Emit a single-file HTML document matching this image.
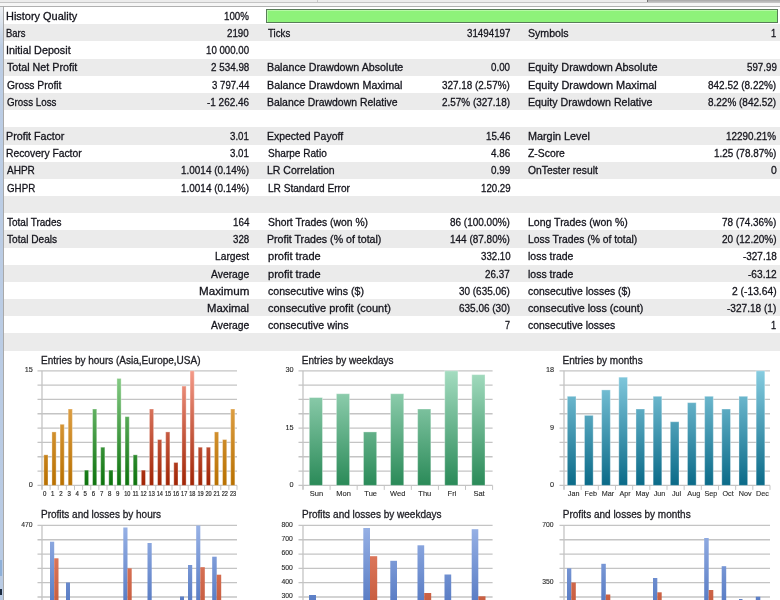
<!DOCTYPE html>
<html><head><meta charset="utf-8">
<style>
html,body{margin:0;padding:0;}
body{width:780px;height:600px;overflow:hidden;background:#fff;position:relative;font-family:"Liberation Sans",sans-serif;}
.rb{position:absolute;left:4px;width:776px;background:#ebebeb;}
.t{position:absolute;font-size:11px;line-height:normal;white-space:pre;color:#14141c;transform-origin:0 0;}
#txt{position:absolute;left:0;top:0;width:780px;height:600px;filter:blur(0.2px);}
.t{-webkit-text-stroke:0.3px #14141c;}
#lstrip{position:absolute;left:0;top:7px;width:3px;height:593px;background:linear-gradient(to bottom,#eceff3 0px,#dfe6ef 12px,#bccde4 40px,#b9cbe4 100%);}
#lspot{position:absolute;left:0;top:560px;width:2px;height:16px;background:#8fb0d8;}
#lglyph{position:absolute;left:0;top:589px;width:1.5px;height:6px;background:#1a2a40;}
#vdiv2{position:absolute;left:647px;top:0;width:1px;height:2px;background:#707070;}
#lline{position:absolute;left:3px;top:6px;width:1px;height:594px;background:#a9a9a9;}
#top0{position:absolute;left:0;top:0;width:780px;height:2px;background:#ececec;}
#top0b{position:absolute;left:647px;top:0;width:133px;height:2px;background:linear-gradient(to bottom,#a8a8a8,#c0c0c0);}
#top1{position:absolute;left:0;top:2px;width:780px;height:1px;background:#c4c4c4;}
#top2{position:absolute;left:0;top:3px;width:780px;height:3px;background:#f6f6f6;}
#top3{position:absolute;left:0;top:6px;width:780px;height:1px;background:#b0b0b0;}
#vdiv{position:absolute;left:317px;top:0;width:1px;height:2px;background:#c8c8c8;}
#gbar{position:absolute;left:266px;top:9px;width:510px;height:12px;border:1px solid #587c58;background:#8ef27a;box-shadow:inset 1px 1px 0 #b6f8a6;}
</style></head><body>
<div id="top0"></div><div id="top0b"></div><div id="vdiv"></div><div id="top1"></div><div id="top2"></div><div id="top3"></div>
<div id="lstrip"></div><div id="lspot"></div><div id="lglyph"></div><div id="lline"></div><div id="vdiv2"></div>
<div class="rb" style="top:24.25px;height:17.18px"></div>
<div class="rb" style="top:58.61px;height:17.18px"></div>
<div class="rb" style="top:92.97px;height:17.18px"></div>
<div class="rb" style="top:127.33px;height:17.18px"></div>
<div class="rb" style="top:161.69px;height:17.18px"></div>
<div class="rb" style="top:196.05px;height:17.18px"></div>
<div class="rb" style="top:230.41px;height:17.18px"></div>
<div class="rb" style="top:264.77px;height:17.18px"></div>
<div class="rb" style="top:299.13px;height:17.18px"></div>
<div class="rb" style="top:333.49px;height:17.18px"></div>
<div id="gbar"></div>
<div id="txt"><span class="t" style="left:6.25px;top:9px;transform:translateY(0.81px) scaleX(0.9951)">History Quality</span>
<span class="t" style="left:224.13px;top:9px;transform:translateY(0.81px) scaleX(0.8881)">100%</span>
<span class="t" style="left:6.36px;top:26px;transform:translateY(1.00px) scaleX(0.8598)">Bars</span>
<span class="t" style="left:227.46px;top:26px;transform:translateY(1.00px) scaleX(0.8884)">2190</span>
<span class="t" style="left:268.20px;top:26px;transform:translateY(1.00px) scaleX(0.8800)">Ticks</span>
<span class="t" style="left:466.78px;top:26px;transform:translateY(1.00px) scaleX(0.8870)">31494197</span>
<span class="t" style="left:528.12px;top:26px;transform:translateY(1.00px) scaleX(0.9639)">Symbols</span>
<span class="t" style="left:771.37px;top:26px;transform:translateY(1.00px) scaleX(0.8400)">1</span>
<span class="t" style="left:6.27px;top:44px;transform:translateY(0.17px) scaleX(0.9786)">Initial Deposit</span>
<span class="t" style="left:206.14px;top:44px;transform:translateY(0.17px) scaleX(0.8792)">10 000.00</span>
<span class="t" style="left:7.00px;top:61px;transform:translateY(0.36px) scaleX(0.9744)">Total Net Profit</span>
<span class="t" style="left:210.95px;top:61px;transform:translateY(0.36px) scaleX(0.8952)">2 534.98</span>
<span class="t" style="left:267.47px;top:61px;transform:translateY(0.36px) scaleX(0.9734)">Balance Drawdown Absolute</span>
<span class="t" style="left:490.98px;top:61px;transform:translateY(0.36px) scaleX(0.8857)">0.00</span>
<span class="t" style="left:527.86px;top:61px;transform:translateY(0.36px) scaleX(0.9904)">Equity Drawdown Absolute</span>
<span class="t" style="left:746.76px;top:61px;transform:translateY(0.36px) scaleX(0.8855)">597.99</span>
<span class="t" style="left:6.53px;top:78px;transform:translateY(0.53px) scaleX(0.9368)">Gross Profit</span>
<span class="t" style="left:211.58px;top:78px;transform:translateY(0.53px) scaleX(0.8753)">3 797.44</span>
<span class="t" style="left:267.47px;top:78px;transform:translateY(0.53px) scaleX(0.9760)">Balance Drawdown Maximal</span>
<span class="t" style="left:442.47px;top:78px;transform:translateY(0.53px) scaleX(0.9007)">327.18 (2.57%)</span>
<span class="t" style="left:527.85px;top:78px;transform:translateY(0.53px) scaleX(0.9934)">Equity Drawdown Maximal</span>
<span class="t" style="left:708.47px;top:78px;transform:translateY(0.53px) scaleX(0.9060)">842.52 (8.22%)</span>
<span class="t" style="left:6.56px;top:95px;transform:translateY(0.72px) scaleX(0.8891)">Gross Loss</span>
<span class="t" style="left:207.17px;top:95px;transform:translateY(0.72px) scaleX(0.9043)">-1 262.46</span>
<span class="t" style="left:267.49px;top:95px;transform:translateY(0.72px) scaleX(0.9495)">Balance Drawdown Relative</span>
<span class="t" style="left:442.25px;top:95px;transform:translateY(0.72px) scaleX(0.9037)">2.57% (327.18)</span>
<span class="t" style="left:527.87px;top:95px;transform:translateY(0.72px) scaleX(0.9690)">Equity Drawdown Relative</span>
<span class="t" style="left:708.47px;top:95px;transform:translateY(0.72px) scaleX(0.9060)">8.22% (842.52)</span>
<span class="t" style="left:6.27px;top:130px;transform:translateY(0.07px) scaleX(0.9738)">Profit Factor</span>
<span class="t" style="left:230.48px;top:130px;transform:translateY(0.07px) scaleX(0.8819)">3.01</span>
<span class="t" style="left:267.49px;top:130px;transform:translateY(0.07px) scaleX(0.9522)">Expected Payoff</span>
<span class="t" style="left:485.63px;top:130px;transform:translateY(0.07px) scaleX(0.8868)">15.46</span>
<span class="t" style="left:527.86px;top:130px;transform:translateY(0.07px) scaleX(0.9830)">Margin Level</span>
<span class="t" style="left:726.33px;top:130px;transform:translateY(0.07px) scaleX(0.8986)">12290.21%</span>
<span class="t" style="left:6.30px;top:147px;transform:translateY(0.25px) scaleX(0.9375)">Recovery Factor</span>
<span class="t" style="left:230.48px;top:147px;transform:translateY(0.25px) scaleX(0.8819)">3.01</span>
<span class="t" style="left:267.74px;top:147px;transform:translateY(0.25px) scaleX(0.9150)">Sharpe Ratio</span>
<span class="t" style="left:490.98px;top:147px;transform:translateY(0.25px) scaleX(0.8964)">4.86</span>
<span class="t" style="left:528.36px;top:147px;transform:translateY(0.25px) scaleX(0.9429)">Z-Score</span>
<span class="t" style="left:714.42px;top:147px;transform:translateY(0.25px) scaleX(0.9018)">1.25 (78.87%)</span>
<span class="t" style="left:7.00px;top:164px;transform:translateY(0.43px) scaleX(0.9100)">AHPR</span>
<span class="t" style="left:181.42px;top:164px;transform:translateY(0.43px) scaleX(0.9041)">1.0014 (0.14%)</span>
<span class="t" style="left:267.48px;top:164px;transform:translateY(0.43px) scaleX(0.9548)">LR Correlation</span>
<span class="t" style="left:490.98px;top:164px;transform:translateY(0.43px) scaleX(0.8964)">0.99</span>
<span class="t" style="left:528.37px;top:164px;transform:translateY(0.43px) scaleX(0.9369)">OnTester result</span>
<span class="t" style="left:770.76px;top:164px;transform:translateY(0.43px) scaleX(0.9455)">0</span>
<span class="t" style="left:6.56px;top:181px;transform:translateY(0.61px) scaleX(0.8878)">GHPR</span>
<span class="t" style="left:181.42px;top:181px;transform:translateY(0.61px) scaleX(0.9041)">1.0014 (0.14%)</span>
<span class="t" style="left:267.51px;top:181px;transform:translateY(0.61px) scaleX(0.9175)">LR Standard Error</span>
<span class="t" style="left:480.54px;top:181px;transform:translateY(0.61px) scaleX(0.8800)">120.29</span>
<span class="t" style="left:7.00px;top:215px;transform:translateY(0.97px) scaleX(0.9088)">Total Trades</span>
<span class="t" style="left:232.73px;top:215px;transform:translateY(0.97px) scaleX(0.8914)">164</span>
<span class="t" style="left:267.73px;top:215px;transform:translateY(0.97px) scaleX(0.9406)">Short Trades (won %)</span>
<span class="t" style="left:450.37px;top:215px;transform:translateY(0.97px) scaleX(0.9073)">86 (100.00%)</span>
<span class="t" style="left:527.88px;top:215px;transform:translateY(0.97px) scaleX(0.9550)">Long Trades (won %)</span>
<span class="t" style="left:722.35px;top:215px;transform:translateY(0.97px) scaleX(0.9051)">78 (74.36%)</span>
<span class="t" style="left:7.00px;top:233px;transform:translateY(0.15px) scaleX(0.9217)">Total Deals</span>
<span class="t" style="left:233.18px;top:233px;transform:translateY(0.15px) scaleX(0.8789)">328</span>
<span class="t" style="left:267.48px;top:233px;transform:translateY(0.15px) scaleX(0.9646)">Profit Trades (% of total)</span>
<span class="t" style="left:450.42px;top:233px;transform:translateY(0.15px) scaleX(0.9066)">144 (87.80%)</span>
<span class="t" style="left:527.89px;top:233px;transform:translateY(0.15px) scaleX(0.9400)">Loss Trades (% of total)</span>
<span class="t" style="left:722.04px;top:233px;transform:translateY(0.15px) scaleX(0.9102)">20 (12.20%)</span>
<span class="t" style="left:214.80px;top:250px;transform:translateY(0.33px) scaleX(0.9306)">Largest</span>
<span class="t" style="left:267.70px;top:250px;transform:translateY(0.33px) scaleX(1.0029)">profit trade</span>
<span class="t" style="left:480.58px;top:250px;transform:translateY(0.33px) scaleX(0.8788)">332.10</span>
<span class="t" style="left:528.12px;top:250px;transform:translateY(0.33px) scaleX(0.9519)">loss trade</span>
<span class="t" style="left:742.77px;top:250px;transform:translateY(0.33px) scaleX(0.9034)">-327.18</span>
<span class="t" style="left:210.90px;top:267px;transform:translateY(0.51px) scaleX(0.9407)">Average</span>
<span class="t" style="left:267.70px;top:267px;transform:translateY(0.51px) scaleX(1.0029)">profit trade</span>
<span class="t" style="left:485.45px;top:267px;transform:translateY(0.51px) scaleX(0.8935)">26.37</span>
<span class="t" style="left:528.12px;top:267px;transform:translateY(0.51px) scaleX(0.9519)">loss trade</span>
<span class="t" style="left:747.87px;top:267px;transform:translateY(0.51px) scaleX(0.9213)">-63.12</span>
<span class="t" style="left:199.11px;top:284px;transform:translateY(0.69px) scaleX(1.0559)">Maximum</span>
<span class="t" style="left:267.96px;top:284px;transform:translateY(0.69px) scaleX(0.9626)">consecutive wins ($)</span>
<span class="t" style="left:459.47px;top:284px;transform:translateY(0.69px) scaleX(0.9027)">30 (635.06)</span>
<span class="t" style="left:528.36px;top:284px;transform:translateY(0.69px) scaleX(0.9435)">consecutive losses ($)</span>
<span class="t" style="left:732.03px;top:284px;transform:translateY(0.69px) scaleX(0.9348)">2 (-13.64)</span>
<span class="t" style="left:207.33px;top:301px;transform:translateY(0.88px) scaleX(1.0289)">Maximal</span>
<span class="t" style="left:267.95px;top:301px;transform:translateY(0.88px) scaleX(1.0004)">consecutive profit (count)</span>
<span class="t" style="left:459.25px;top:301px;transform:translateY(0.88px) scaleX(0.9068)">635.06 (30)</span>
<span class="t" style="left:528.36px;top:301px;transform:translateY(0.88px) scaleX(0.9765)">consecutive loss (count)</span>
<span class="t" style="left:727.37px;top:301px;transform:translateY(0.88px) scaleX(0.9170)">-327.18 (1)</span>
<span class="t" style="left:210.90px;top:319px;transform:translateY(0.06px) scaleX(0.9407)">Average</span>
<span class="t" style="left:267.96px;top:319px;transform:translateY(0.06px) scaleX(0.9680)">consecutive wins</span>
<span class="t" style="left:505.09px;top:319px;transform:translateY(0.06px) scaleX(0.8190)">7</span>
<span class="t" style="left:528.36px;top:319px;transform:translateY(0.06px) scaleX(0.9450)">consecutive losses</span>
<span class="t" style="left:771.37px;top:319px;transform:translateY(0.06px) scaleX(0.8400)">1</span></div>
<svg id="ch" width="780" height="600" viewBox="0 0 780 600" style="position:absolute;left:0;top:0;filter:blur(0.2px)">
<defs>
<linearGradient id="gor" gradientUnits="userSpaceOnUse" x1="0" y1="370.8" x2="0" y2="485.4"><stop offset="0" stop-color="#eeb462"/><stop offset="1" stop-color="#b87000"/></linearGradient>
<linearGradient id="ggr" gradientUnits="userSpaceOnUse" x1="0" y1="370.8" x2="0" y2="485.4"><stop offset="0" stop-color="#8cd08c"/><stop offset="1" stop-color="#0c720c"/></linearGradient>
<linearGradient id="grd" gradientUnits="userSpaceOnUse" x1="0" y1="370.8" x2="0" y2="485.4"><stop offset="0" stop-color="#f49a88"/><stop offset="1" stop-color="#a02404"/></linearGradient>
<linearGradient id="gwk" gradientUnits="userSpaceOnUse" x1="0" y1="370.8" x2="0" y2="485.4"><stop offset="0" stop-color="#a4dcc0"/><stop offset="1" stop-color="#2a8a58"/></linearGradient>
<linearGradient id="gmo" gradientUnits="userSpaceOnUse" x1="0" y1="370.8" x2="0" y2="485.4"><stop offset="0" stop-color="#86cce0"/><stop offset="1" stop-color="#0a6a88"/></linearGradient>
<linearGradient id="gbl" gradientUnits="userSpaceOnUse" x1="0" y1="525.4" x2="0" y2="640"><stop offset="0" stop-color="#98b2e6"/><stop offset="1" stop-color="#3a62b4"/></linearGradient>
<linearGradient id="grl" gradientUnits="userSpaceOnUse" x1="0" y1="525.4" x2="0" y2="640"><stop offset="0" stop-color="#e8866c"/><stop offset="1" stop-color="#b84a2a"/></linearGradient>
</defs>
<text x="41.00" y="364.20" font-family="Liberation Sans" font-size="10" text-anchor="start" fill="#1e1e24" stroke="#1e1e24" stroke-width="0.3">Entries by hours (Asia,Europe,USA)</text>
<line x1="37.5" y1="370.80" x2="237" y2="370.80" stroke="#c4c4c4" stroke-width="1.3"/>
<line x1="37.5" y1="385.12" x2="237" y2="385.12" stroke="#c4c4c4" stroke-width="1.3"/>
<line x1="37.5" y1="399.45" x2="237" y2="399.45" stroke="#c4c4c4" stroke-width="1.3"/>
<line x1="37.5" y1="413.77" x2="237" y2="413.77" stroke="#c4c4c4" stroke-width="1.3"/>
<line x1="37.5" y1="428.10" x2="237" y2="428.10" stroke="#c4c4c4" stroke-width="1.3"/>
<line x1="37.5" y1="442.42" x2="237" y2="442.42" stroke="#c4c4c4" stroke-width="1.3"/>
<line x1="37.5" y1="456.75" x2="237" y2="456.75" stroke="#c4c4c4" stroke-width="1.3"/>
<line x1="37.5" y1="471.07" x2="237" y2="471.07" stroke="#c4c4c4" stroke-width="1.3"/>
<line x1="37.5" y1="485.40" x2="237" y2="485.40" stroke="#c4c4c4" stroke-width="1.3"/>
<line x1="42" y1="370.80" x2="42" y2="489.40" stroke="#c4c4c4" stroke-width="1.3"/>
<line x1="42.00" y1="485.40" x2="42.00" y2="489.90" stroke="#c4c4c4" stroke-width="1"/>
<line x1="50.12" y1="485.40" x2="50.12" y2="489.90" stroke="#c4c4c4" stroke-width="1"/>
<line x1="58.25" y1="485.40" x2="58.25" y2="489.90" stroke="#c4c4c4" stroke-width="1"/>
<line x1="66.38" y1="485.40" x2="66.38" y2="489.90" stroke="#c4c4c4" stroke-width="1"/>
<line x1="74.50" y1="485.40" x2="74.50" y2="489.90" stroke="#c4c4c4" stroke-width="1"/>
<line x1="82.62" y1="485.40" x2="82.62" y2="489.90" stroke="#c4c4c4" stroke-width="1"/>
<line x1="90.75" y1="485.40" x2="90.75" y2="489.90" stroke="#c4c4c4" stroke-width="1"/>
<line x1="98.88" y1="485.40" x2="98.88" y2="489.90" stroke="#c4c4c4" stroke-width="1"/>
<line x1="107.00" y1="485.40" x2="107.00" y2="489.90" stroke="#c4c4c4" stroke-width="1"/>
<line x1="115.12" y1="485.40" x2="115.12" y2="489.90" stroke="#c4c4c4" stroke-width="1"/>
<line x1="123.25" y1="485.40" x2="123.25" y2="489.90" stroke="#c4c4c4" stroke-width="1"/>
<line x1="131.38" y1="485.40" x2="131.38" y2="489.90" stroke="#c4c4c4" stroke-width="1"/>
<line x1="139.50" y1="485.40" x2="139.50" y2="489.90" stroke="#c4c4c4" stroke-width="1"/>
<line x1="147.62" y1="485.40" x2="147.62" y2="489.90" stroke="#c4c4c4" stroke-width="1"/>
<line x1="155.75" y1="485.40" x2="155.75" y2="489.90" stroke="#c4c4c4" stroke-width="1"/>
<line x1="163.88" y1="485.40" x2="163.88" y2="489.90" stroke="#c4c4c4" stroke-width="1"/>
<line x1="172.00" y1="485.40" x2="172.00" y2="489.90" stroke="#c4c4c4" stroke-width="1"/>
<line x1="180.12" y1="485.40" x2="180.12" y2="489.90" stroke="#c4c4c4" stroke-width="1"/>
<line x1="188.25" y1="485.40" x2="188.25" y2="489.90" stroke="#c4c4c4" stroke-width="1"/>
<line x1="196.38" y1="485.40" x2="196.38" y2="489.90" stroke="#c4c4c4" stroke-width="1"/>
<line x1="204.50" y1="485.40" x2="204.50" y2="489.90" stroke="#c4c4c4" stroke-width="1"/>
<line x1="212.62" y1="485.40" x2="212.62" y2="489.90" stroke="#c4c4c4" stroke-width="1"/>
<line x1="220.75" y1="485.40" x2="220.75" y2="489.90" stroke="#c4c4c4" stroke-width="1"/>
<line x1="228.88" y1="485.40" x2="228.88" y2="489.90" stroke="#c4c4c4" stroke-width="1"/>
<line x1="237.00" y1="485.40" x2="237.00" y2="489.90" stroke="#c4c4c4" stroke-width="1"/>
<rect x="43.80" y="454.84" width="4.2" height="30.56" fill="url(#gor)" stroke="#fff" stroke-opacity="0.35" stroke-width="1"/>
<rect x="51.92" y="431.92" width="4.2" height="53.48" fill="url(#gor)" stroke="#fff" stroke-opacity="0.35" stroke-width="1"/>
<rect x="60.05" y="424.28" width="4.2" height="61.12" fill="url(#gor)" stroke="#fff" stroke-opacity="0.35" stroke-width="1"/>
<rect x="68.17" y="409.00" width="4.2" height="76.40" fill="url(#gor)" stroke="#fff" stroke-opacity="0.35" stroke-width="1"/>
<rect x="84.42" y="470.12" width="4.2" height="15.28" fill="url(#ggr)" stroke="#fff" stroke-opacity="0.35" stroke-width="1"/>
<rect x="92.55" y="409.00" width="4.2" height="76.40" fill="url(#ggr)" stroke="#fff" stroke-opacity="0.35" stroke-width="1"/>
<rect x="100.67" y="447.20" width="4.2" height="38.20" fill="url(#ggr)" stroke="#fff" stroke-opacity="0.35" stroke-width="1"/>
<rect x="108.80" y="470.12" width="4.2" height="15.28" fill="url(#ggr)" stroke="#fff" stroke-opacity="0.35" stroke-width="1"/>
<rect x="116.92" y="378.44" width="4.2" height="106.96" fill="url(#ggr)" stroke="#fff" stroke-opacity="0.35" stroke-width="1"/>
<rect x="125.05" y="416.64" width="4.2" height="68.76" fill="url(#ggr)" stroke="#fff" stroke-opacity="0.35" stroke-width="1"/>
<rect x="133.18" y="454.84" width="4.2" height="30.56" fill="url(#ggr)" stroke="#fff" stroke-opacity="0.35" stroke-width="1"/>
<rect x="141.30" y="470.12" width="4.2" height="15.28" fill="url(#grd)" stroke="#fff" stroke-opacity="0.35" stroke-width="1"/>
<rect x="149.43" y="409.00" width="4.2" height="76.40" fill="url(#grd)" stroke="#fff" stroke-opacity="0.35" stroke-width="1"/>
<rect x="157.55" y="439.56" width="4.2" height="45.84" fill="url(#grd)" stroke="#fff" stroke-opacity="0.35" stroke-width="1"/>
<rect x="165.68" y="431.92" width="4.2" height="53.48" fill="url(#grd)" stroke="#fff" stroke-opacity="0.35" stroke-width="1"/>
<rect x="173.80" y="462.48" width="4.2" height="22.92" fill="url(#grd)" stroke="#fff" stroke-opacity="0.35" stroke-width="1"/>
<rect x="181.93" y="386.08" width="4.2" height="99.32" fill="url(#grd)" stroke="#fff" stroke-opacity="0.35" stroke-width="1"/>
<rect x="190.05" y="370.80" width="4.2" height="114.60" fill="url(#grd)" stroke="#fff" stroke-opacity="0.35" stroke-width="1"/>
<rect x="198.18" y="447.20" width="4.2" height="38.20" fill="url(#grd)" stroke="#fff" stroke-opacity="0.35" stroke-width="1"/>
<rect x="206.30" y="447.20" width="4.2" height="38.20" fill="url(#grd)" stroke="#fff" stroke-opacity="0.35" stroke-width="1"/>
<rect x="214.43" y="431.92" width="4.2" height="53.48" fill="url(#gor)" stroke="#fff" stroke-opacity="0.35" stroke-width="1"/>
<rect x="222.55" y="439.56" width="4.2" height="45.84" fill="url(#gor)" stroke="#fff" stroke-opacity="0.35" stroke-width="1"/>
<rect x="230.68" y="409.00" width="4.2" height="76.40" fill="url(#gor)" stroke="#fff" stroke-opacity="0.35" stroke-width="1"/>
<text x="43.00" y="496.00" font-family="Liberation Sans" font-size="7.0" text-anchor="start" fill="#2a2a2a" stroke="#2a2a2a" stroke-width="0.2" textLength="3.4" lengthAdjust="spacingAndGlyphs">0</text>
<text x="51.12" y="496.00" font-family="Liberation Sans" font-size="7.0" text-anchor="start" fill="#2a2a2a" stroke="#2a2a2a" stroke-width="0.2" textLength="3.4" lengthAdjust="spacingAndGlyphs">1</text>
<text x="59.25" y="496.00" font-family="Liberation Sans" font-size="7.0" text-anchor="start" fill="#2a2a2a" stroke="#2a2a2a" stroke-width="0.2" textLength="3.4" lengthAdjust="spacingAndGlyphs">2</text>
<text x="67.38" y="496.00" font-family="Liberation Sans" font-size="7.0" text-anchor="start" fill="#2a2a2a" stroke="#2a2a2a" stroke-width="0.2" textLength="3.4" lengthAdjust="spacingAndGlyphs">3</text>
<text x="75.50" y="496.00" font-family="Liberation Sans" font-size="7.0" text-anchor="start" fill="#2a2a2a" stroke="#2a2a2a" stroke-width="0.2" textLength="3.4" lengthAdjust="spacingAndGlyphs">4</text>
<text x="83.62" y="496.00" font-family="Liberation Sans" font-size="7.0" text-anchor="start" fill="#2a2a2a" stroke="#2a2a2a" stroke-width="0.2" textLength="3.4" lengthAdjust="spacingAndGlyphs">5</text>
<text x="91.75" y="496.00" font-family="Liberation Sans" font-size="7.0" text-anchor="start" fill="#2a2a2a" stroke="#2a2a2a" stroke-width="0.2" textLength="3.4" lengthAdjust="spacingAndGlyphs">6</text>
<text x="99.88" y="496.00" font-family="Liberation Sans" font-size="7.0" text-anchor="start" fill="#2a2a2a" stroke="#2a2a2a" stroke-width="0.2" textLength="3.4" lengthAdjust="spacingAndGlyphs">7</text>
<text x="108.00" y="496.00" font-family="Liberation Sans" font-size="7.0" text-anchor="start" fill="#2a2a2a" stroke="#2a2a2a" stroke-width="0.2" textLength="3.4" lengthAdjust="spacingAndGlyphs">8</text>
<text x="116.12" y="496.00" font-family="Liberation Sans" font-size="7.0" text-anchor="start" fill="#2a2a2a" stroke="#2a2a2a" stroke-width="0.2" textLength="3.4" lengthAdjust="spacingAndGlyphs">9</text>
<text x="124.25" y="496.00" font-family="Liberation Sans" font-size="7.0" text-anchor="start" fill="#2a2a2a" stroke="#2a2a2a" stroke-width="0.2" textLength="6.2" lengthAdjust="spacingAndGlyphs">10</text>
<text x="132.38" y="496.00" font-family="Liberation Sans" font-size="7.0" text-anchor="start" fill="#2a2a2a" stroke="#2a2a2a" stroke-width="0.2" textLength="6.2" lengthAdjust="spacingAndGlyphs">11</text>
<text x="140.50" y="496.00" font-family="Liberation Sans" font-size="7.0" text-anchor="start" fill="#2a2a2a" stroke="#2a2a2a" stroke-width="0.2" textLength="6.2" lengthAdjust="spacingAndGlyphs">12</text>
<text x="148.62" y="496.00" font-family="Liberation Sans" font-size="7.0" text-anchor="start" fill="#2a2a2a" stroke="#2a2a2a" stroke-width="0.2" textLength="6.2" lengthAdjust="spacingAndGlyphs">13</text>
<text x="156.75" y="496.00" font-family="Liberation Sans" font-size="7.0" text-anchor="start" fill="#2a2a2a" stroke="#2a2a2a" stroke-width="0.2" textLength="6.2" lengthAdjust="spacingAndGlyphs">14</text>
<text x="164.88" y="496.00" font-family="Liberation Sans" font-size="7.0" text-anchor="start" fill="#2a2a2a" stroke="#2a2a2a" stroke-width="0.2" textLength="6.2" lengthAdjust="spacingAndGlyphs">15</text>
<text x="173.00" y="496.00" font-family="Liberation Sans" font-size="7.0" text-anchor="start" fill="#2a2a2a" stroke="#2a2a2a" stroke-width="0.2" textLength="6.2" lengthAdjust="spacingAndGlyphs">16</text>
<text x="181.12" y="496.00" font-family="Liberation Sans" font-size="7.0" text-anchor="start" fill="#2a2a2a" stroke="#2a2a2a" stroke-width="0.2" textLength="6.2" lengthAdjust="spacingAndGlyphs">17</text>
<text x="189.25" y="496.00" font-family="Liberation Sans" font-size="7.0" text-anchor="start" fill="#2a2a2a" stroke="#2a2a2a" stroke-width="0.2" textLength="6.2" lengthAdjust="spacingAndGlyphs">18</text>
<text x="197.38" y="496.00" font-family="Liberation Sans" font-size="7.0" text-anchor="start" fill="#2a2a2a" stroke="#2a2a2a" stroke-width="0.2" textLength="6.2" lengthAdjust="spacingAndGlyphs">19</text>
<text x="205.50" y="496.00" font-family="Liberation Sans" font-size="7.0" text-anchor="start" fill="#2a2a2a" stroke="#2a2a2a" stroke-width="0.2" textLength="6.2" lengthAdjust="spacingAndGlyphs">20</text>
<text x="213.62" y="496.00" font-family="Liberation Sans" font-size="7.0" text-anchor="start" fill="#2a2a2a" stroke="#2a2a2a" stroke-width="0.2" textLength="6.2" lengthAdjust="spacingAndGlyphs">21</text>
<text x="221.75" y="496.00" font-family="Liberation Sans" font-size="7.0" text-anchor="start" fill="#2a2a2a" stroke="#2a2a2a" stroke-width="0.2" textLength="6.2" lengthAdjust="spacingAndGlyphs">22</text>
<text x="229.88" y="496.00" font-family="Liberation Sans" font-size="7.0" text-anchor="start" fill="#2a2a2a" stroke="#2a2a2a" stroke-width="0.2" textLength="6.2" lengthAdjust="spacingAndGlyphs">23</text>
<text x="32.80" y="372.40" font-family="Liberation Sans" font-size="7.3" text-anchor="end" fill="#2a2a2a" stroke="#2a2a2a" stroke-width="0.12">15</text>
<text x="32.80" y="487.00" font-family="Liberation Sans" font-size="7.3" text-anchor="end" fill="#2a2a2a" stroke="#2a2a2a" stroke-width="0.12">0</text>
<text x="301.80" y="364.20" font-family="Liberation Sans" font-size="10" text-anchor="start" fill="#1e1e24" stroke="#1e1e24" stroke-width="0.3">Entries by weekdays</text>
<line x1="298.5" y1="370.80" x2="492.6" y2="370.80" stroke="#c4c4c4" stroke-width="1.3"/>
<line x1="298.5" y1="385.12" x2="492.6" y2="385.12" stroke="#c4c4c4" stroke-width="1.3"/>
<line x1="298.5" y1="399.45" x2="492.6" y2="399.45" stroke="#c4c4c4" stroke-width="1.3"/>
<line x1="298.5" y1="413.77" x2="492.6" y2="413.77" stroke="#c4c4c4" stroke-width="1.3"/>
<line x1="298.5" y1="428.10" x2="492.6" y2="428.10" stroke="#c4c4c4" stroke-width="1.3"/>
<line x1="298.5" y1="442.42" x2="492.6" y2="442.42" stroke="#c4c4c4" stroke-width="1.3"/>
<line x1="298.5" y1="456.75" x2="492.6" y2="456.75" stroke="#c4c4c4" stroke-width="1.3"/>
<line x1="298.5" y1="471.07" x2="492.6" y2="471.07" stroke="#c4c4c4" stroke-width="1.3"/>
<line x1="298.5" y1="485.40" x2="492.6" y2="485.40" stroke="#c4c4c4" stroke-width="1.3"/>
<line x1="303" y1="370.80" x2="303" y2="489.40" stroke="#c4c4c4" stroke-width="1.3"/>
<line x1="303.00" y1="485.40" x2="303.00" y2="489.90" stroke="#c4c4c4" stroke-width="1"/>
<line x1="330.09" y1="485.40" x2="330.09" y2="489.90" stroke="#c4c4c4" stroke-width="1"/>
<line x1="357.17" y1="485.40" x2="357.17" y2="489.90" stroke="#c4c4c4" stroke-width="1"/>
<line x1="384.26" y1="485.40" x2="384.26" y2="489.90" stroke="#c4c4c4" stroke-width="1"/>
<line x1="411.34" y1="485.40" x2="411.34" y2="489.90" stroke="#c4c4c4" stroke-width="1"/>
<line x1="438.43" y1="485.40" x2="438.43" y2="489.90" stroke="#c4c4c4" stroke-width="1"/>
<line x1="465.51" y1="485.40" x2="465.51" y2="489.90" stroke="#c4c4c4" stroke-width="1"/>
<line x1="492.60" y1="485.40" x2="492.60" y2="489.90" stroke="#c4c4c4" stroke-width="1"/>
<rect x="309.30" y="397.54" width="13.2" height="87.86" fill="url(#gwk)" stroke="#fff" stroke-opacity="0.35" stroke-width="1"/>
<text x="316.50" y="496.30" font-family="Liberation Sans" font-size="7.5" text-anchor="middle" fill="#2a2a2a" stroke="#2a2a2a" stroke-width="0.12">Sun</text>
<rect x="336.39" y="393.72" width="13.2" height="91.68" fill="url(#gwk)" stroke="#fff" stroke-opacity="0.35" stroke-width="1"/>
<text x="343.59" y="496.30" font-family="Liberation Sans" font-size="7.5" text-anchor="middle" fill="#2a2a2a" stroke="#2a2a2a" stroke-width="0.12">Mon</text>
<rect x="363.47" y="431.92" width="13.2" height="53.48" fill="url(#gwk)" stroke="#fff" stroke-opacity="0.35" stroke-width="1"/>
<text x="370.67" y="496.30" font-family="Liberation Sans" font-size="7.5" text-anchor="middle" fill="#2a2a2a" stroke="#2a2a2a" stroke-width="0.12">Tue</text>
<rect x="390.56" y="393.72" width="13.2" height="91.68" fill="url(#gwk)" stroke="#fff" stroke-opacity="0.35" stroke-width="1"/>
<text x="397.76" y="496.30" font-family="Liberation Sans" font-size="7.5" text-anchor="middle" fill="#2a2a2a" stroke="#2a2a2a" stroke-width="0.12">Wed</text>
<rect x="417.64" y="409.00" width="13.2" height="76.40" fill="url(#gwk)" stroke="#fff" stroke-opacity="0.35" stroke-width="1"/>
<text x="424.84" y="496.30" font-family="Liberation Sans" font-size="7.5" text-anchor="middle" fill="#2a2a2a" stroke="#2a2a2a" stroke-width="0.12">Thu</text>
<rect x="444.73" y="370.80" width="13.2" height="114.60" fill="url(#gwk)" stroke="#fff" stroke-opacity="0.35" stroke-width="1"/>
<text x="451.93" y="496.30" font-family="Liberation Sans" font-size="7.5" text-anchor="middle" fill="#2a2a2a" stroke="#2a2a2a" stroke-width="0.12">Fri</text>
<rect x="471.81" y="374.62" width="13.2" height="110.78" fill="url(#gwk)" stroke="#fff" stroke-opacity="0.35" stroke-width="1"/>
<text x="479.01" y="496.30" font-family="Liberation Sans" font-size="7.5" text-anchor="middle" fill="#2a2a2a" stroke="#2a2a2a" stroke-width="0.12">Sat</text>
<text x="293.60" y="372.40" font-family="Liberation Sans" font-size="7.3" text-anchor="end" fill="#2a2a2a" stroke="#2a2a2a" stroke-width="0.12">30</text>
<text x="293.60" y="429.70" font-family="Liberation Sans" font-size="7.3" text-anchor="end" fill="#2a2a2a" stroke="#2a2a2a" stroke-width="0.12">15</text>
<text x="293.60" y="487.00" font-family="Liberation Sans" font-size="7.3" text-anchor="end" fill="#2a2a2a" stroke="#2a2a2a" stroke-width="0.12">0</text>
<text x="562.60" y="364.20" font-family="Liberation Sans" font-size="10" text-anchor="start" fill="#1e1e24" stroke="#1e1e24" stroke-width="0.3">Entries by months</text>
<line x1="559.5" y1="370.80" x2="770" y2="370.80" stroke="#c4c4c4" stroke-width="1.3"/>
<line x1="559.5" y1="385.12" x2="770" y2="385.12" stroke="#c4c4c4" stroke-width="1.3"/>
<line x1="559.5" y1="399.45" x2="770" y2="399.45" stroke="#c4c4c4" stroke-width="1.3"/>
<line x1="559.5" y1="413.77" x2="770" y2="413.77" stroke="#c4c4c4" stroke-width="1.3"/>
<line x1="559.5" y1="428.10" x2="770" y2="428.10" stroke="#c4c4c4" stroke-width="1.3"/>
<line x1="559.5" y1="442.42" x2="770" y2="442.42" stroke="#c4c4c4" stroke-width="1.3"/>
<line x1="559.5" y1="456.75" x2="770" y2="456.75" stroke="#c4c4c4" stroke-width="1.3"/>
<line x1="559.5" y1="471.07" x2="770" y2="471.07" stroke="#c4c4c4" stroke-width="1.3"/>
<line x1="559.5" y1="485.40" x2="770" y2="485.40" stroke="#c4c4c4" stroke-width="1.3"/>
<line x1="564" y1="370.80" x2="564" y2="489.40" stroke="#c4c4c4" stroke-width="1.3"/>
<line x1="564.00" y1="485.40" x2="564.00" y2="489.90" stroke="#c4c4c4" stroke-width="1"/>
<line x1="581.17" y1="485.40" x2="581.17" y2="489.90" stroke="#c4c4c4" stroke-width="1"/>
<line x1="598.33" y1="485.40" x2="598.33" y2="489.90" stroke="#c4c4c4" stroke-width="1"/>
<line x1="615.50" y1="485.40" x2="615.50" y2="489.90" stroke="#c4c4c4" stroke-width="1"/>
<line x1="632.67" y1="485.40" x2="632.67" y2="489.90" stroke="#c4c4c4" stroke-width="1"/>
<line x1="649.83" y1="485.40" x2="649.83" y2="489.90" stroke="#c4c4c4" stroke-width="1"/>
<line x1="667.00" y1="485.40" x2="667.00" y2="489.90" stroke="#c4c4c4" stroke-width="1"/>
<line x1="684.17" y1="485.40" x2="684.17" y2="489.90" stroke="#c4c4c4" stroke-width="1"/>
<line x1="701.33" y1="485.40" x2="701.33" y2="489.90" stroke="#c4c4c4" stroke-width="1"/>
<line x1="718.50" y1="485.40" x2="718.50" y2="489.90" stroke="#c4c4c4" stroke-width="1"/>
<line x1="735.67" y1="485.40" x2="735.67" y2="489.90" stroke="#c4c4c4" stroke-width="1"/>
<line x1="752.83" y1="485.40" x2="752.83" y2="489.90" stroke="#c4c4c4" stroke-width="1"/>
<line x1="770.00" y1="485.40" x2="770.00" y2="489.90" stroke="#c4c4c4" stroke-width="1"/>
<rect x="567.30" y="396.27" width="8.7" height="89.13" fill="url(#gmo)" stroke="#fff" stroke-opacity="0.35" stroke-width="1"/>
<text x="573.60" y="496.30" font-family="Liberation Sans" font-size="7.2" text-anchor="middle" fill="#2a2a2a" stroke="#2a2a2a" stroke-width="0.12">Jan</text>
<rect x="584.47" y="415.37" width="8.7" height="70.03" fill="url(#gmo)" stroke="#fff" stroke-opacity="0.35" stroke-width="1"/>
<text x="590.77" y="496.30" font-family="Liberation Sans" font-size="7.2" text-anchor="middle" fill="#2a2a2a" stroke="#2a2a2a" stroke-width="0.12">Feb</text>
<rect x="601.63" y="389.90" width="8.7" height="95.50" fill="url(#gmo)" stroke="#fff" stroke-opacity="0.35" stroke-width="1"/>
<text x="607.93" y="496.30" font-family="Liberation Sans" font-size="7.2" text-anchor="middle" fill="#2a2a2a" stroke="#2a2a2a" stroke-width="0.12">Mar</text>
<rect x="618.80" y="377.17" width="8.7" height="108.23" fill="url(#gmo)" stroke="#fff" stroke-opacity="0.35" stroke-width="1"/>
<text x="625.10" y="496.30" font-family="Liberation Sans" font-size="7.2" text-anchor="middle" fill="#2a2a2a" stroke="#2a2a2a" stroke-width="0.12">Apr</text>
<rect x="635.97" y="409.00" width="8.7" height="76.40" fill="url(#gmo)" stroke="#fff" stroke-opacity="0.35" stroke-width="1"/>
<text x="642.27" y="496.30" font-family="Liberation Sans" font-size="7.2" text-anchor="middle" fill="#2a2a2a" stroke="#2a2a2a" stroke-width="0.12">May</text>
<rect x="653.13" y="396.27" width="8.7" height="89.13" fill="url(#gmo)" stroke="#fff" stroke-opacity="0.35" stroke-width="1"/>
<text x="659.43" y="496.30" font-family="Liberation Sans" font-size="7.2" text-anchor="middle" fill="#2a2a2a" stroke="#2a2a2a" stroke-width="0.12">Jun</text>
<rect x="670.30" y="421.73" width="8.7" height="63.67" fill="url(#gmo)" stroke="#fff" stroke-opacity="0.35" stroke-width="1"/>
<text x="676.60" y="496.30" font-family="Liberation Sans" font-size="7.2" text-anchor="middle" fill="#2a2a2a" stroke="#2a2a2a" stroke-width="0.12">Jul</text>
<rect x="687.47" y="402.63" width="8.7" height="82.77" fill="url(#gmo)" stroke="#fff" stroke-opacity="0.35" stroke-width="1"/>
<text x="693.77" y="496.30" font-family="Liberation Sans" font-size="7.2" text-anchor="middle" fill="#2a2a2a" stroke="#2a2a2a" stroke-width="0.12">Aug</text>
<rect x="704.63" y="396.27" width="8.7" height="89.13" fill="url(#gmo)" stroke="#fff" stroke-opacity="0.35" stroke-width="1"/>
<text x="710.93" y="496.30" font-family="Liberation Sans" font-size="7.2" text-anchor="middle" fill="#2a2a2a" stroke="#2a2a2a" stroke-width="0.12">Sep</text>
<rect x="721.80" y="409.00" width="8.7" height="76.40" fill="url(#gmo)" stroke="#fff" stroke-opacity="0.35" stroke-width="1"/>
<text x="728.10" y="496.30" font-family="Liberation Sans" font-size="7.2" text-anchor="middle" fill="#2a2a2a" stroke="#2a2a2a" stroke-width="0.12">Oct</text>
<rect x="738.97" y="396.27" width="8.7" height="89.13" fill="url(#gmo)" stroke="#fff" stroke-opacity="0.35" stroke-width="1"/>
<text x="745.27" y="496.30" font-family="Liberation Sans" font-size="7.2" text-anchor="middle" fill="#2a2a2a" stroke="#2a2a2a" stroke-width="0.12">Nov</text>
<rect x="756.13" y="370.80" width="8.7" height="114.60" fill="url(#gmo)" stroke="#fff" stroke-opacity="0.35" stroke-width="1"/>
<text x="762.43" y="496.30" font-family="Liberation Sans" font-size="7.2" text-anchor="middle" fill="#2a2a2a" stroke="#2a2a2a" stroke-width="0.12">Dec</text>
<text x="554.00" y="372.40" font-family="Liberation Sans" font-size="7.3" text-anchor="end" fill="#2a2a2a" stroke="#2a2a2a" stroke-width="0.12">18</text>
<text x="554.00" y="429.70" font-family="Liberation Sans" font-size="7.3" text-anchor="end" fill="#2a2a2a" stroke="#2a2a2a" stroke-width="0.12">9</text>
<text x="554.00" y="487.00" font-family="Liberation Sans" font-size="7.3" text-anchor="end" fill="#2a2a2a" stroke="#2a2a2a" stroke-width="0.12">0</text>
<text x="41.00" y="518.30" font-family="Liberation Sans" font-size="10" text-anchor="start" fill="#1e1e24" stroke="#1e1e24" stroke-width="0.3">Profits and losses by hours</text>
<line x1="37.5" y1="525.40" x2="237" y2="525.40" stroke="#c4c4c4" stroke-width="1.3"/>
<line x1="37.5" y1="539.73" x2="237" y2="539.73" stroke="#c4c4c4" stroke-width="1.3"/>
<line x1="37.5" y1="554.05" x2="237" y2="554.05" stroke="#c4c4c4" stroke-width="1.3"/>
<line x1="37.5" y1="568.38" x2="237" y2="568.38" stroke="#c4c4c4" stroke-width="1.3"/>
<line x1="37.5" y1="582.70" x2="237" y2="582.70" stroke="#c4c4c4" stroke-width="1.3"/>
<line x1="37.5" y1="597.02" x2="237" y2="597.02" stroke="#c4c4c4" stroke-width="1.3"/>
<line x1="42" y1="525.4" x2="42" y2="600" stroke="#c4c4c4" stroke-width="1.3"/>
<text x="32.50" y="526.70" font-family="Liberation Sans" font-size="6.8" text-anchor="end" fill="#2a2a2a" stroke="#2a2a2a" stroke-width="0.12">470</text>
<rect x="50.00" y="541.70" width="4.20" height="60.30" fill="url(#gbl)"/>
<rect x="54.20" y="558.30" width="4.30" height="43.70" fill="url(#grl)"/>
<rect x="66.00" y="582.50" width="4.00" height="19.50" fill="url(#gbl)"/>
<rect x="123.30" y="527.50" width="4.20" height="74.50" fill="url(#gbl)"/>
<rect x="127.50" y="568.30" width="4.20" height="33.70" fill="url(#grl)"/>
<rect x="147.50" y="543.00" width="4.20" height="59.00" fill="url(#gbl)"/>
<rect x="180.00" y="596.50" width="4.00" height="5.50" fill="url(#gbl)"/>
<rect x="188.00" y="565.00" width="4.20" height="37.00" fill="url(#gbl)"/>
<rect x="196.20" y="525.50" width="4.10" height="76.50" fill="url(#gbl)"/>
<rect x="200.30" y="567.20" width="4.50" height="34.80" fill="url(#grl)"/>
<rect x="212.20" y="556.70" width="4.50" height="45.30" fill="url(#gbl)"/>
<rect x="216.70" y="574.70" width="4.50" height="27.30" fill="url(#grl)"/>
<text x="302.00" y="518.30" font-family="Liberation Sans" font-size="10" text-anchor="start" fill="#1e1e24" stroke="#1e1e24" stroke-width="0.3">Profits and losses by weekdays</text>
<line x1="298.5" y1="525.40" x2="492.6" y2="525.40" stroke="#c4c4c4" stroke-width="1.3"/>
<line x1="298.5" y1="539.73" x2="492.6" y2="539.73" stroke="#c4c4c4" stroke-width="1.3"/>
<line x1="298.5" y1="554.05" x2="492.6" y2="554.05" stroke="#c4c4c4" stroke-width="1.3"/>
<line x1="298.5" y1="568.38" x2="492.6" y2="568.38" stroke="#c4c4c4" stroke-width="1.3"/>
<line x1="298.5" y1="582.70" x2="492.6" y2="582.70" stroke="#c4c4c4" stroke-width="1.3"/>
<line x1="298.5" y1="597.02" x2="492.6" y2="597.02" stroke="#c4c4c4" stroke-width="1.3"/>
<line x1="303" y1="525.4" x2="303" y2="600" stroke="#c4c4c4" stroke-width="1.3"/>
<text x="292.80" y="526.70" font-family="Liberation Sans" font-size="6.8" text-anchor="end" fill="#2a2a2a" stroke="#2a2a2a" stroke-width="0.12">800</text>
<text x="292.80" y="541.02" font-family="Liberation Sans" font-size="6.8" text-anchor="end" fill="#2a2a2a" stroke="#2a2a2a" stroke-width="0.12">700</text>
<text x="292.80" y="555.35" font-family="Liberation Sans" font-size="6.8" text-anchor="end" fill="#2a2a2a" stroke="#2a2a2a" stroke-width="0.12">600</text>
<text x="292.80" y="569.67" font-family="Liberation Sans" font-size="6.8" text-anchor="end" fill="#2a2a2a" stroke="#2a2a2a" stroke-width="0.12">500</text>
<text x="292.80" y="584.00" font-family="Liberation Sans" font-size="6.8" text-anchor="end" fill="#2a2a2a" stroke="#2a2a2a" stroke-width="0.12">400</text>
<text x="292.80" y="598.32" font-family="Liberation Sans" font-size="6.8" text-anchor="end" fill="#2a2a2a" stroke="#2a2a2a" stroke-width="0.12">300</text>
<rect x="309.00" y="595.00" width="7.00" height="7.00" fill="url(#gbl)"/>
<rect x="363.30" y="528.00" width="6.70" height="74.00" fill="url(#gbl)"/>
<rect x="370.00" y="556.20" width="7.20" height="45.80" fill="url(#grl)"/>
<rect x="390.30" y="560.80" width="6.70" height="41.20" fill="url(#gbl)"/>
<rect x="417.50" y="545.30" width="6.70" height="56.70" fill="url(#gbl)"/>
<rect x="424.20" y="593.00" width="7.00" height="9.00" fill="url(#grl)"/>
<rect x="444.50" y="574.50" width="6.70" height="27.50" fill="url(#gbl)"/>
<rect x="471.70" y="529.20" width="6.60" height="72.80" fill="url(#gbl)"/>
<rect x="478.30" y="596.30" width="7.20" height="5.70" fill="url(#grl)"/>
<text x="562.80" y="518.30" font-family="Liberation Sans" font-size="10" text-anchor="start" fill="#1e1e24" stroke="#1e1e24" stroke-width="0.3">Profits and losses by months</text>
<line x1="559.5" y1="525.40" x2="770" y2="525.40" stroke="#c4c4c4" stroke-width="1.3"/>
<line x1="559.5" y1="539.73" x2="770" y2="539.73" stroke="#c4c4c4" stroke-width="1.3"/>
<line x1="559.5" y1="554.05" x2="770" y2="554.05" stroke="#c4c4c4" stroke-width="1.3"/>
<line x1="559.5" y1="568.38" x2="770" y2="568.38" stroke="#c4c4c4" stroke-width="1.3"/>
<line x1="559.5" y1="582.70" x2="770" y2="582.70" stroke="#c4c4c4" stroke-width="1.3"/>
<line x1="559.5" y1="597.02" x2="770" y2="597.02" stroke="#c4c4c4" stroke-width="1.3"/>
<line x1="564" y1="525.4" x2="564" y2="600" stroke="#c4c4c4" stroke-width="1.3"/>
<text x="553.50" y="526.70" font-family="Liberation Sans" font-size="6.8" text-anchor="end" fill="#2a2a2a" stroke="#2a2a2a" stroke-width="0.12">700</text>
<text x="553.50" y="584.00" font-family="Liberation Sans" font-size="6.8" text-anchor="end" fill="#2a2a2a" stroke="#2a2a2a" stroke-width="0.12">350</text>
<rect x="567.00" y="568.30" width="4.30" height="33.70" fill="url(#gbl)"/>
<rect x="571.30" y="582.50" width="4.50" height="19.50" fill="url(#grl)"/>
<rect x="601.30" y="563.80" width="4.50" height="38.20" fill="url(#gbl)"/>
<rect x="605.80" y="594.50" width="4.50" height="7.50" fill="url(#grl)"/>
<rect x="653.00" y="578.00" width="4.30" height="24.00" fill="url(#gbl)"/>
<rect x="657.30" y="592.30" width="4.40" height="9.70" fill="url(#grl)"/>
<rect x="704.20" y="538.00" width="4.50" height="64.00" fill="url(#gbl)"/>
<rect x="708.70" y="590.00" width="4.60" height="12.00" fill="url(#grl)"/>
<rect x="721.70" y="566.20" width="4.50" height="35.80" fill="url(#gbl)"/>
<rect x="739.00" y="599.00" width="3.50" height="3.00" fill="url(#gbl)"/>
<rect x="755.80" y="596.70" width="4.50" height="5.30" fill="url(#gbl)"/>
</svg>
</body></html>
